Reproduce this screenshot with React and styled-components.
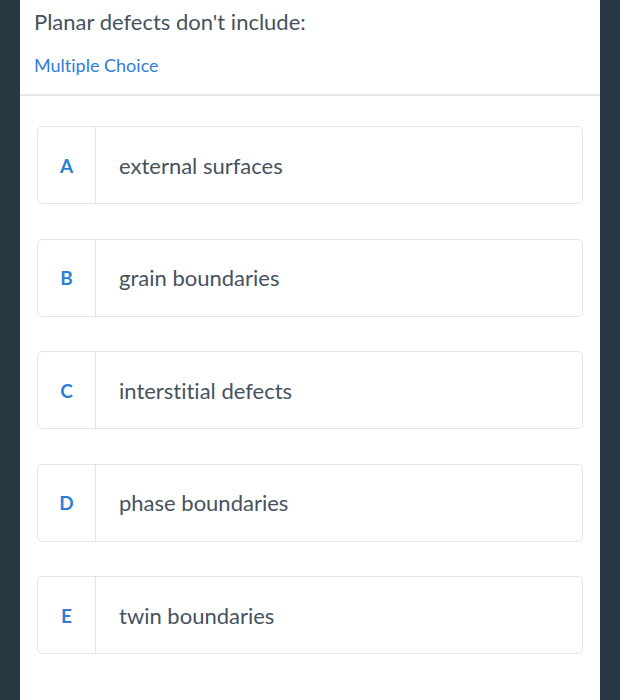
import React from 'react';
import styled, { createGlobalStyle } from 'styled-components';

const GlobalStyle = createGlobalStyle`
  html, body {
    margin: 0;
    padding: 0;
    background: #283843;
  }
  * { box-sizing: border-box; }
`;

const options = [
  { letter: 'A', text: 'external surfaces' },
  { letter: 'B', text: 'grain boundaries' },
  { letter: 'C', text: 'interstitial defects' },
  { letter: 'D', text: 'phase boundaries' },
  { letter: 'E', text: 'twin boundaries' },
];

const App = () => {
  return (
    <>
      <GlobalStyle />
      <Page>
        <Panel>
          <Header>
            <Question>Planar defects don't include:</Question>
            <Kind>Multiple Choice</Kind>
          </Header>
          <List>
            {options.map((item) => (
              <Option key={item.letter}>
                <Letter>{item.letter}</Letter>
                <Answer>{item.text}</Answer>
              </Option>
            ))}
          </List>
        </Panel>
      </Page>
    </>
  );
};

const Page = styled.div`
  display: flex;
  justify-content: flex-start;
  width: 620px;
  height: 700px;
  background: #283843;
  padding-left: 20px;
  overflow: hidden;
`;

const Panel = styled.div`
  width: 580px;
  height: 700px;
  background: #ffffff;
  font-family: Lato, 'Noto Sans', sans-serif;
  font-variant-ligatures: none;
`;

const Header = styled.div`
  padding: 6px 14px 0;
  height: 96px;
  border-bottom: 2px solid #e6e8ea;
`;

const Question = styled.div`
  font-size: 22px;
  color: #46525e;
  line-height: 32px;
`;

const Kind = styled.div`
  margin-top: 15px;
  font-size: 18px;
  color: #2f7ed6;
  line-height: 24px;
`;

const List = styled.div`
  display: flex;
  flex-direction: column;
  gap: 34.5px;
  padding: 30px 17px 0 17px;
`;

const Option = styled.div`
  display: flex;
  height: 78px;
  border: 1.5px solid #e3e5e8;
  border-radius: 5px;
`;

const Letter = styled.div`
  width: 58px;
  display: flex;
  align-items: center;
  justify-content: center;
  border-right: 1.5px solid #e3e5e8;
  color: #2f7ed6;
  font-weight: 700;
  font-size: 19px;
`;

const Answer = styled.div`
  display: flex;
  align-items: center;
  padding-left: 23px;
  font-size: 22px;
  color: #46525e;
`;

export default App;
